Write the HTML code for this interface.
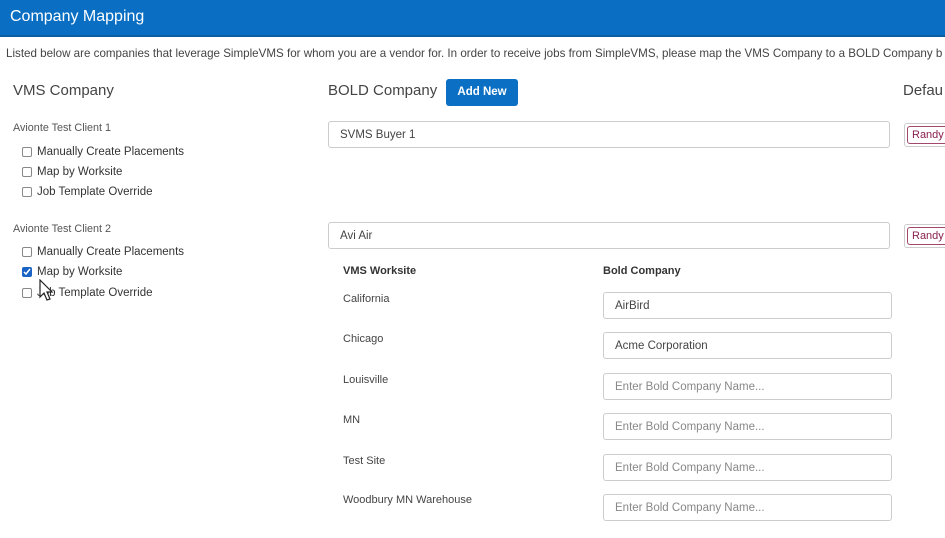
<!DOCTYPE html>
<html><head><style>
*{box-sizing:border-box;margin:0;padding:0}
body{width:945px;height:538px;overflow:hidden;background:#fff;font-family:"Liberation Sans",sans-serif;color:#444;position:relative}
.hdr{position:absolute;left:0;top:0;width:945px;height:37px;background:#0a6fc2;border-bottom:2px solid #0d5ea3}
.hdr span{position:absolute;left:10px;top:8px;color:#fff;font-size:16px}
.a{position:absolute;white-space:nowrap}
.desc{left:6px;top:47px;font-size:11.6px;color:#444}
.h{font-size:15px;color:#444}
.cl{font-size:10.8px;color:#555}
.cb{font-size:11.5px;color:#333}
.box{position:absolute;width:10px;height:10px;border:1px solid #888;border-radius:2px;background:#fff}
.in{position:absolute;border:1px solid #ccc;border-radius:3px;background:#fff;font-size:11.5px;color:#444;padding-left:11px;display:flex;align-items:center}
.ph{color:#888}
.btn{left:446px;top:79px;width:72px;height:27px;background:#0b6fc3;border-radius:3px;color:#fff;font-size:11.5px;font-weight:bold;text-align:center;line-height:27px}
.r{position:absolute;left:904px;width:50px;height:24px;border:1px solid #ccc;border-radius:3px;padding:2px}
.r div{border:1.5px solid #a0496a;border-radius:3px;height:18px;color:#8a2050;font-size:11px;padding-left:4px;line-height:16px}
.ws{font-size:11px;color:#444}
</style></head><body>
<div class="hdr"><span>Company Mapping</span></div>
<div class="a desc">Listed below are companies that leverage SimpleVMS for whom you are a vendor for. In order to receive jobs from SimpleVMS, please map the VMS Company to a BOLD Company b</div>
<div class="a h" style="left:13px;top:82px">VMS Company</div>
<div class="a h" style="left:328px;top:82px">BOLD Company</div>
<div class="a btn">Add New</div>
<div class="a h" style="left:903px;top:82px">Defau</div>

<div class="a cl" style="left:13px;top:122px">Avionte Test Client 1</div>
<div class="box" style="left:22px;top:147px"></div><div class="a cb" style="left:37px;top:146px">Manually Create Placements</div>
<div class="box" style="left:22px;top:167px"></div><div class="a cb" style="left:37px;top:166px">Map by Worksite</div>
<div class="box" style="left:22px;top:187px"></div><div class="a cb" style="left:37px;top:186px">Job Template Override</div>

<div class="a cl" style="left:13px;top:223px">Avionte Test Client 2</div>
<div class="box" style="left:22px;top:247px"></div><div class="a cb" style="left:37px;top:246px">Manually Create Placements</div>
<div class="box" style="left:22px;top:267px;background:#1a63c4;border-color:#1a63c4"><svg width="8" height="8" style="position:absolute;left:0;top:0"><path d="M1 4l2 2 4-5" stroke="#fff" stroke-width="1.5" fill="none"/></svg></div><div class="a cb" style="left:37px;top:266px">Map by Worksite</div>
<div class="box" style="left:22px;top:288px"></div><div class="a cb" style="left:37px;top:287px">Job Template Override</div>
<svg class="a" style="left:39px;top:279px" width="18" height="24"><path d="M1 1 L1 18 L5 14 L8 21 L11 20 L8 13 L13 13 Z" fill="#fff" stroke="#222" stroke-width="1.2"/></svg>

<div class="in" style="left:328px;top:121px;width:562px;height:27px">SVMS Buyer 1</div>
<div class="r" style="top:123px"><div>Randy</div></div>
<div class="in" style="left:328px;top:222px;width:562px;height:27px">Avi Air</div>
<div class="r" style="top:224px"><div>Randy</div></div>

<div class="a ws" style="left:343px;top:265px;font-weight:bold;color:#333">VMS Worksite</div>
<div class="a ws" style="left:603px;top:265px;font-weight:bold;color:#333">Bold Company</div>
<div class="a ws" style="left:343px;top:293px">California</div>
<div class="a ws" style="left:343px;top:333px">Chicago</div>
<div class="a ws" style="left:343px;top:374px">Louisville</div>
<div class="a ws" style="left:343px;top:414px">MN</div>
<div class="a ws" style="left:343px;top:455px">Test Site</div>
<div class="a ws" style="left:343px;top:494px">Woodbury MN Warehouse</div>
<div class="in" style="left:603px;top:292px;width:289px;height:27px">AirBird</div>
<div class="in" style="left:603px;top:332px;width:289px;height:27px">Acme Corporation</div>
<div class="in ph" style="left:603px;top:373px;width:289px;height:27px">Enter Bold Company Name...</div>
<div class="in ph" style="left:603px;top:413px;width:289px;height:27px">Enter Bold Company Name...</div>
<div class="in ph" style="left:603px;top:454px;width:289px;height:27px">Enter Bold Company Name...</div>
<div class="in ph" style="left:603px;top:494px;width:289px;height:27px">Enter Bold Company Name...</div>
</body></html>
